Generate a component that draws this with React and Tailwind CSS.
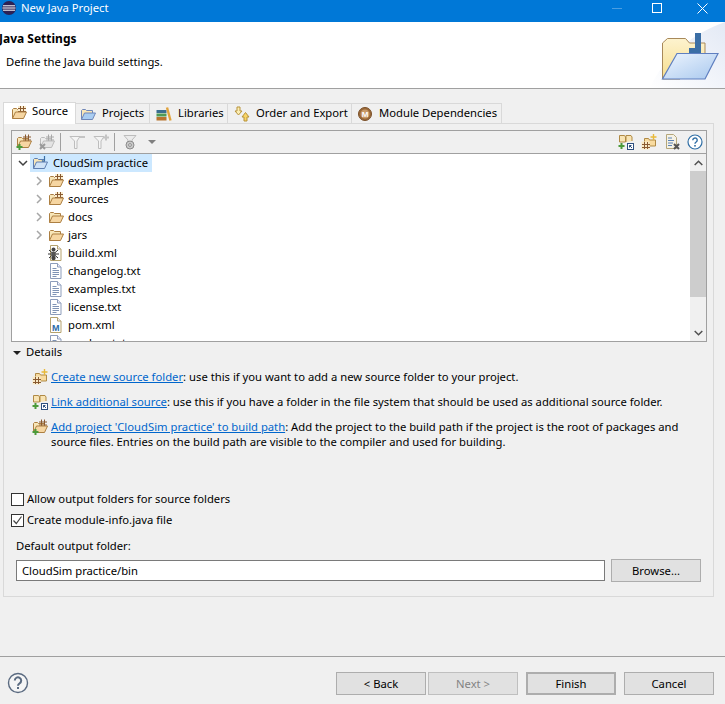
import React from 'react';

// small eclipse style icons, all on a 16 box
const Grid = ({ x = 0, y = 0, color = '#8a5a30' }) => (
  <path
    d={`M${x + 2.5} ${y}v7M${x + 5.5} ${y}v7M${x} ${y + 2.5}h8M${x} ${y + 5.5}h8`}
    stroke={color}
    strokeWidth="1"
    fill="none"
  />
);

// children sit between the back and the front flap
const OpenFolder = ({ back = '#f8e6b8', front = '#f6d6a2', line = '#ac7f42', children }) => (
  <>
    <path d="M1.500 13.500V4.500l1-1h3l1 1h6v3" fill={back} stroke={line} />
    {children}
    <path d="M1.500 13.500l3-6.500h11l-3 6.500z" fill={front} stroke={line} />
  </>
);

const SourceFolder = () => (
  <svg width="16" height="16" viewBox="0 0 16 16" className="shrink-0">
    <OpenFolder>
      <rect x="7" y="1" width="8" height="7" fill="#fbeed0" />
      <Grid x={7} y={1} />
    </OpenFolder>
  </svg>
);

const PlainFolder = () => (
  <svg width="16" height="16" viewBox="0 0 16 16" className="shrink-0">
    <OpenFolder />
  </svg>
);

const ProjectsFolder = () => (
  <svg width="16" height="16" viewBox="0 0 16 16" className="shrink-0">
    <OpenFolder back="#f8e6b8" front="#a9cdf2" line="#6f86b8" />
  </svg>
);

const JavaProject = () => (
  <svg width="16" height="16" viewBox="0 0 16 16" className="shrink-0">
    <OpenFolder back="#f8e6b8" front="#cfe3f7" line="#5f7fb0">
      <path d="M12.500 1v4.500l-1.500 1-1-1" stroke="#3a6ea5" strokeWidth="1.200" fill="none" />
    </OpenFolder>
  </svg>
);

const AddSource = ({ off }) => (
  <svg width="16" height="16" viewBox="0 0 16 16" className="shrink-0" opacity={off ? 0.7 : 1}>
    <OpenFolder back={off ? '#ececec' : '#f8e6b8'} front={off ? '#e0e0e0' : '#f6d6a2'} line={off ? '#a5a5a5' : '#ac7f42'}>
      <Grid x={7} y={0.5} color={off ? '#8a8a8a' : '#8a5a30'} />
    </OpenFolder>
    {off ? (
      <path d="M1 10l5 5M6 10l-5 5" stroke="#777" strokeWidth="2" />
    ) : (
      <path d="M3.500 10v6M.5 13h6" stroke="#4c9a3a" strokeWidth="2" />
    )}
  </svg>
);

const LinkSource = () => (
  <svg width="16" height="16" viewBox="0 0 16 16" className="shrink-0">
    <path d="M1.500 8V1.500h5l1 1.500v5zM8 8V1.500h5l1 1.500v4" fill="#f8e4b4" stroke="#b08a45" />
    <path d="M3.500 9v6M.5 12h6" stroke="#4c9a3a" strokeWidth="2" />
    <rect x="9.500" y="9.500" width="6" height="6" fill="#fff" stroke="#2d4f80" />
    <path d="M11.500 11.500l2.500 2.500M11.500 11.500h2M11.500 11.500v2" stroke="#2d4f80" fill="none" />
  </svg>
);

const NewFolder = () => (
  <svg width="16" height="16" viewBox="0 0 16 16" className="shrink-0">
    <path d="M3.500 8V4.500h4l1 1.500h6v6h-6" fill="#f8dba0" stroke="#b08a45" />
    <rect x="0.500" y="7.500" width="8" height="8" fill="#f8e9c6" />
    <Grid x={1} y={8} />
    <path d="M12.500 0v6M9.500 3h6" stroke="#e8b93a" strokeWidth="1.400" />
  </svg>
);

const RemoveFile = () => (
  <svg width="16" height="16" viewBox="0 0 16 16" className="shrink-0">
    <path d="M2.500.5h7l3 3v11h-10z" fill="#f5f2e6" stroke="#b5a77a" />
    <path d="M4 4h4M4 6.500h6M4 9h5M4 11.500h4" stroke="#5b82b5" />
    <path d="M10 10l5 5M15 10l-5 5" stroke="#555" strokeWidth="2" />
  </svg>
);

const HelpSmall = () => (
  <svg width="16" height="16" viewBox="0 0 16 16" className="shrink-0">
    <circle cx="8" cy="8" r="7" fill="#fff" stroke="#2f6ea5" strokeWidth="1.200" />
    <path d="M5.800 6.200a2.200 2.200 0 1 1 3.400 1.800c-.8.500-1.200 1-1.200 1.800" fill="none" stroke="#2f6ea5" strokeWidth="1.400" />
    <rect x="7.200" y="11" width="1.600" height="1.600" fill="#2f6ea5" />
  </svg>
);

const Filter = ({ sign }) => (
  <svg width="16" height="16" viewBox="0 0 16 16" className="shrink-0">
    <path d="M1 2.500h10L8 7v7.500H5.500V7z" fill="#f4f4f4" stroke="#bdbdbd" />
    {sign === 'minus' && <path d="M11 3h5" stroke="#c4c4c4" strokeWidth="2" />}
    {sign === 'plus' && <path d="M13 .5v6M10 3.500h6" stroke="#c4c4c4" strokeWidth="2" />}
  </svg>
);

const FilterGear = () => (
  <svg width="16" height="16" viewBox="0 0 16 16" className="shrink-0">
    <path d="M1 1.500h12L9 6v2H5V6z" fill="#ececec" stroke="#bdbdbd" />
    <circle cx="7" cy="11" r="4" fill="#c9c9c9" stroke="#8c8c8c" />
    <circle cx="7" cy="11" r="1.400" fill="#f0f0f0" stroke="#8c8c8c" />
  </svg>
);

const Libs = () => (
  <svg width="16" height="16" viewBox="0 0 16 16" className="shrink-0">
    <rect x="0.500" y="4" width="10" height="3" fill="#3b6d8f" />
    <rect x="0.500" y="7.500" width="10" height="3" fill="#4f9a55" />
    <rect x="0.500" y="11" width="10" height="3.500" fill="#b8742f" />
    <path d="M11 1.500l3.500 13" stroke="#e0a23c" strokeWidth="2.400" />
  </svg>
);

const OrderArrows = () => (
  <svg width="16" height="16" viewBox="0 0 16 16" className="shrink-0">
    <path d="M3 1h3v4h2L4.500 9 1 5h2z" fill="#fbeeb5" stroke="#b8933a" />
    <path d="M10 15v-4H8l3.500-4.500L15 11h-2v4z" fill="#f8d567" stroke="#b8933a" />
  </svg>
);

const ModuleDot = () => (
  <svg width="16" height="16" viewBox="0 0 16 16" className="shrink-0">
    <circle cx="8" cy="8" r="6.500" fill="#9a6a3a" stroke="#7a4f28" />
    <circle cx="8" cy="8" r="4.500" fill="#c89a68" />
    <text x="8" y="11" textAnchor="middle" fontSize="8" fontWeight="700" fill="#fff" fontFamily="Liberation Sans">M</text>
  </svg>
);

const TextFile = ({ kind }) => (
  <svg width="16" height="16" viewBox="0 0 16 16" className="shrink-0">
    <path d="M2.500.5h7l3.500 3.500v11.500H2.500z" fill="#fff" stroke={kind === 'txt' ? '#8d9dbb' : '#b5a26e'} />
    <path d="M9.500.5V4H13" fill="#eef" stroke={kind === 'txt' ? '#8d9dbb' : '#b5a26e'} />
    {kind === 'txt' && <path d="M4.500 5.500h4M4.500 7.500h6.500M4.500 9.500h6.500M4.500 11.500h6.500M4.500 13.500h4" stroke="#7f93b5" />}
    {kind === 'pom' && (
      <text x="7.800" y="13.500" textAnchor="middle" fontSize="9" fontWeight="700" fill="#2a6aa8" fontFamily="Liberation Sans">M</text>
    )}
    {kind === 'ant' && (
      <>
        <path d="M1 5l9 8M10 5l-9 8M0 9h11" stroke="#333" />
        <ellipse cx="5.500" cy="4.500" rx="2" ry="2" fill="#444" />
        <ellipse cx="5.500" cy="9" rx="2.200" ry="2.400" fill="#555" />
        <ellipse cx="5.500" cy="13" rx="2.200" ry="2.200" fill="#444" />
      </>
    )}
  </svg>
);

const Chevron = ({ open, dark }) => (
  <svg width="10" height="10" viewBox="0 0 10 10" className="shrink-0">
    {open ? (
      <path d="M1 3l4 4 4-4" fill="none" stroke="#404040" strokeWidth="1.500" />
    ) : (
      <path d="M3 1l4 4-4 4" fill="none" stroke={dark ? '#404040' : '#a6a6a6'} strokeWidth="1.500" />
    )}
  </svg>
);

const BigFolder = () => (
  <svg width="75" height="66" viewBox="0 0 75 66" className="shrink-0">
    <defs>
      <linearGradient id="wedge" x1="0" y1="1" x2="1" y2="0">
        <stop offset="0" stopColor="#ffffff" />
        <stop offset="1" stopColor="#e3e9f5" />
      </linearGradient>
      <linearGradient id="front" x1="0" y1="0" x2="1" y2="1">
        <stop offset="0" stopColor="#eef5fe" />
        <stop offset="1" stopColor="#a8c8ee" />
      </linearGradient>
      <linearGradient id="back" x1="0" y1="0" x2="0" y2="1">
        <stop offset="0" stopColor="#fdf3cf" />
        <stop offset="1" stopColor="#f6de8e" />
      </linearGradient>
    </defs>
    <path d="M0 66C12 38 40 12 75 0v66z" fill="url(#wedge)" />
    <path d="M12.500 57V21l5-4.500h18l4 4.500h15.500v12l-25 24z" fill="url(#back)" stroke="#a8895a" />
    <path d="M45 11h6v20H39v-5h6z" fill="#3b6ea5" />
    <path d="M27 31.500h41L55 57H12.500z" fill="url(#front)" stroke="#5f7fc0" strokeWidth="1.200" />
  </svg>
);

const tree = [
  { name: 'examples', icon: <SourceFolder />, arrow: true },
  { name: 'sources', icon: <SourceFolder />, arrow: true },
  { name: 'docs', icon: <PlainFolder />, arrow: true },
  { name: 'jars', icon: <PlainFolder />, arrow: true },
  { name: 'build.xml', icon: <TextFile kind="ant" /> },
  { name: 'changelog.txt', icon: <TextFile kind="txt" /> },
  { name: 'examples.txt', icon: <TextFile kind="txt" /> },
  { name: 'license.txt', icon: <TextFile kind="txt" /> },
  { name: 'pom.xml', icon: <TextFile kind="pom" /> },
  { name: 'readme.txt', icon: <TextFile kind="txt" /> },
];

const tabs = [
  { name: 'Projects', icon: <ProjectsFolder />, w: 'w-[74px] pl-[4px]' },
  { name: 'Libraries', icon: <Libs />, w: 'w-[78px] pl-[6px]' },
  { name: 'Order and Export', icon: <OrderArrows />, w: 'w-[124px] pl-[6px]' },
  { name: 'Module Dependencies', icon: <ModuleDot />, w: 'w-[150px] pl-[5px]' },
];

const Tab = ({ tab }) => (
  <div className={`${tab.w} h-[20px] flex items-center gap-[6px] whitespace-nowrap border border-l-0 border-b-0 border-[#d9d9d9]`}>
    {tab.icon}
    <span className="-mt-[2px]">{tab.name}</span>
  </div>
);

const Btn = ({ children, className = '' }) => (
  <div className={`w-[90px] h-[23px] flex items-center justify-center border border-[#adadad] bg-[#e1e1e1] ${className}`}>
    {children}
  </div>
);

const App = () => {
  return (
    <div className="w-[725px] h-[704px] overflow-hidden flex flex-col bg-[#f0f0f0] text-[11.25px] leading-[16px] text-[#000] font-['Noto_Sans','Open_Sans',sans-serif]">
      {/* title bar */}
      <div className="h-[22px] shrink-0 bg-[#0078d7] text-white flex items-center pl-[2px]">
        <svg width="14" height="14" viewBox="0 0 14 14" className="shrink-0 -mt-[6px]">
          <circle cx="7" cy="7" r="7" fill="#2c2255" />
          <path d="M1 4.800h12M.5 7h13M1 9.200h12" stroke="#fff" strokeWidth="1" />
        </svg>
        <span className="ml-[5px] -mt-[7px]">New Java Project</span>
        <div className="ml-auto flex items-center -mt-[6px]">
          <div className="w-[10px] h-px bg-[#4a9ee2]" />
          <div className="ml-[30px] w-[10px] h-[10px] border border-white" />
          <svg width="11" height="11" viewBox="0 0 11 11" className="ml-[35px] mr-[17px]">
            <path d="M.5.500l10 10M10.500.500l-10 10" stroke="#fff" />
          </svg>
        </div>
      </div>

      {/* banner */}
      <div className="h-[67px] shrink-0 bg-white border-b border-[#a0a0a0] flex justify-between">
        <div>
          <div className="mt-[9px] -ml-[1px] font-bold text-[12px]">Java Settings</div>
          <div className="mt-[7px] ml-[6px]">Define the Java build settings.</div>
        </div>
        <BigFolder />
      </div>

      {/* tabs */}
      <div className="pl-[3px] mt-[12px] h-[22px] flex items-end shrink-0">
        <div className="w-[73px] h-[22px] -mb-px relative bg-white flex items-center gap-[5px] pl-[7px] border border-b-0 border-[#d9d9d9]">
          <div className="-mt-[2px]"><SourceFolder /></div>
          <span className="-mt-[5px]">Source</span>
        </div>
        {tabs.map((tab) => (
          <Tab key={tab.name} tab={tab} />
        ))}
      </div>

      {/* tab body */}
      <div className="ml-[3px] w-[711px] h-[474px] shrink-0 border border-[#d9d9d9] pt-[6px] pl-[7px]">
        <div className="w-[696px] h-[212px] border border-[#a0a0a0] flex flex-col">
          <div className="h-[23px] shrink-0 border-b border-[#a0a0a0] flex items-center pl-[4px]">
            <AddSource />
            <div className="ml-[7px]"><AddSource off /></div>
            <div className="ml-[5px] w-px h-[18px] bg-[#a0a0a0]" />
            <div className="ml-[8px]"><Filter sign="minus" /></div>
            <div className="ml-[8px]"><Filter sign="plus" /></div>
            <div className="ml-[5px] w-px h-[18px] bg-[#a0a0a0]" />
            <div className="ml-[8px]"><FilterGear /></div>
            <div className="ml-[9px] w-0 h-0 border-x-[4px] border-x-transparent border-t-[4px] border-t-[#808080]" />
            <div className="ml-auto flex gap-[7px] pr-[3px]">
              <LinkSource />
              <NewFolder />
              <RemoveFile />
              <HelpSmall />
            </div>
          </div>
          <div className="flex-1 min-h-0 flex bg-white">
            <div className="flex-1 overflow-hidden">
              <div className="h-[18px] flex items-center pl-[6px]">
                <Chevron open />
                <div className="ml-[2px] h-[18px] w-[122px] bg-[#cce8ff] flex items-center pl-[2px] whitespace-nowrap">
                  <JavaProject />
                  <span className="ml-[5px]">CloudSim practice</span>
                </div>
              </div>
              {tree.map((row) => (
                <div key={row.name} className="h-[18px] flex items-center">
                  <div className="ml-[22px] w-[14px] shrink-0">{row.arrow && <Chevron />}</div>
                  {row.icon}
                  <span className="ml-[4px]">{row.name}</span>
                </div>
              ))}
            </div>
            <div className="w-[16px] shrink-0 bg-[#f0f0f0] flex flex-col items-center">
              <div className="h-[17px] flex items-center justify-center">
                <svg width="9" height="6" viewBox="0 0 9 6"><path d="M.7 5l3.800-3.800L8.300 5" fill="none" stroke="#505050" strokeWidth="1.500" /></svg>
              </div>
              <div className="w-full h-[126px] bg-[#cdcdcd]" />
              <div className="mt-auto h-[17px] flex items-center justify-center">
                <svg width="9" height="6" viewBox="0 0 9 6"><path d="M.7 1l3.800 3.800L8.300 1" fill="none" stroke="#505050" strokeWidth="1.500" /></svg>
              </div>
            </div>
          </div>
        </div>

        {/* details */}
        <div className="h-[21px] flex items-center pl-[2px]">
          <div className="w-0 h-0 border-x-[4px] border-x-transparent border-t-[4px] border-t-[#202020]" />
          <span className="ml-[5px] -mt-[1px]">Details</span>
        </div>
        <div className="mt-[6px] pl-[21px] flex flex-col gap-[9px]">
          <div className="flex gap-[3px]">
            <NewFolder />
            <p><a className="text-[#0066cc] underline">Create new source folder</a>: use this if you want to add a new source folder to your project.</p>
          </div>
          <div className="flex gap-[3px]">
            <LinkSource />
            <p><a className="text-[#0066cc] underline">Link additional source</a>: use this if you have a folder in the file system that should be used as additional source folder.</p>
          </div>
          <div className="flex gap-[3px]">
            <AddSource />
            <p className="w-[650px] leading-[15px]"><a className="text-[#0066cc] underline">Add project 'CloudSim practice' to build path</a>: Add the project to the build path if the project is the root of packages and source files. Entries on the build path are visible to the compiler and used for building.</p>
          </div>
        </div>

        <div className="mt-[42px] flex items-center gap-[3px]">
          <div className="w-[13px] h-[13px] border border-[#333] bg-white" />
          <span>Allow output folders for source folders</span>
        </div>
        <div className="mt-[5px] flex items-center gap-[3px]">
          <div className="w-[13px] h-[13px] border border-[#333] bg-white flex items-center justify-center">
            <svg width="11" height="11" viewBox="0 0 11 11"><path d="M1.500 5.500l2.800 3L9.500 1.500" fill="none" stroke="#444" strokeWidth="1.200" /></svg>
          </div>
          <span>Create module-info.java file</span>
        </div>
        <div className="mt-[10px] ml-[5px]">Default output folder:</div>
        <div className="mt-[5px] ml-[5px] flex items-center gap-[6px]">
          <div className="w-[589px] h-[21px] border border-[#7a7a7a] bg-white flex items-center pl-[5px]">CloudSim practice/bin</div>
          <Btn>Browse...</Btn>
        </div>
      </div>

      {/* footer */}
      <div className="mt-[59px] flex-1 border-t border-[#a0a0a0] flex items-start pt-[15px]">
        <svg width="22" height="22" viewBox="0 0 22 22" className="ml-[7px] shrink-0">
          <circle cx="11" cy="11" r="9.500" fill="#f5f5f5" stroke="#5a6a80" strokeWidth="1.400" />
          <path d="M7.800 8.500a3.200 3.200 0 1 1 4.800 2.800c-1 .6-1.600 1.200-1.600 2.400" fill="none" stroke="#5a6a80" strokeWidth="2" />
          <rect x="10" y="15" width="2" height="2" fill="#5a6a80" />
        </svg>
        <div className="ml-auto mr-[11px] flex">
          <Btn>&lt; Back</Btn>
          <Btn className="ml-[2px] bg-[#cccccc] border-[#bfbfbf] text-[#838383]">Next &gt;</Btn>
          <Btn className="ml-[8px] border-2 border-[#0078d7]">Finish</Btn>
          <Btn className="ml-[8px]">Cancel</Btn>
        </div>
      </div>
    </div>
  );
};

export default App;
